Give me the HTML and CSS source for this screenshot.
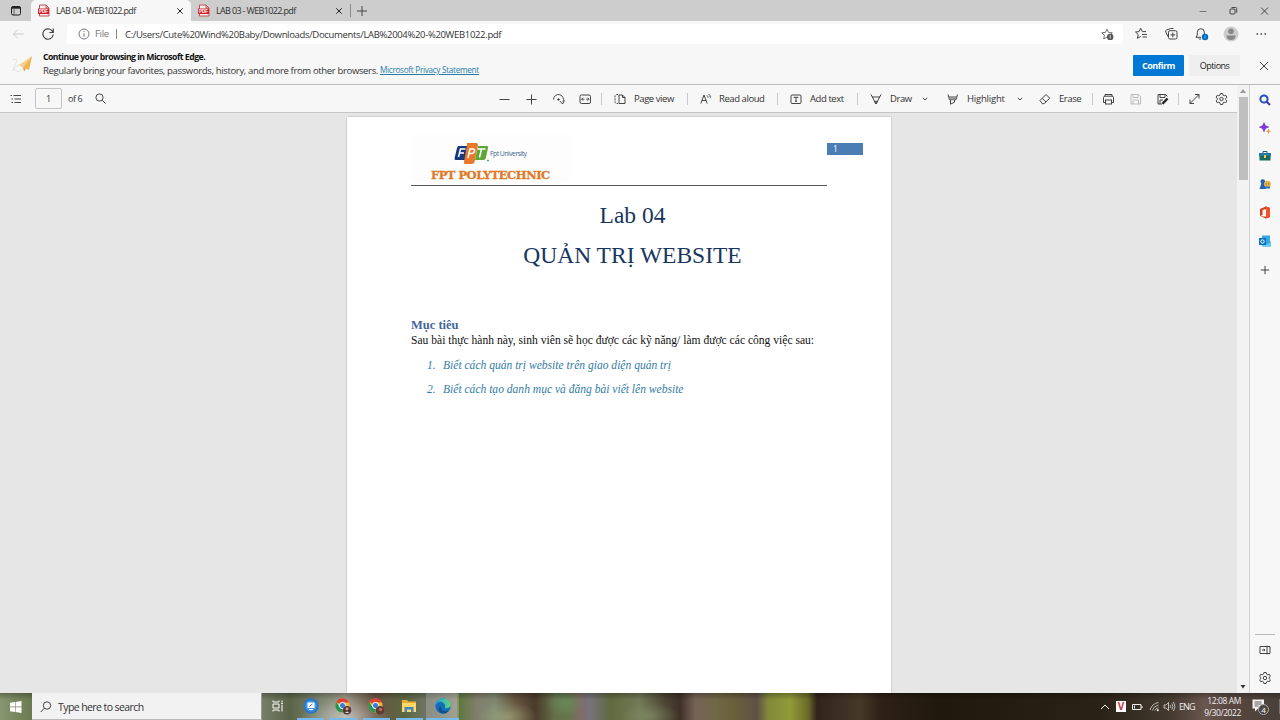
FILE: index.html
```html
<!DOCTYPE html>
<html lang="en">
  <head>
    <meta charset="utf-8">
    <meta name="viewport" content="width=device-width, initial-scale=1.0">
    <title>LAB 04 - WEB1022.pdf</title>
    <link rel="stylesheet" href="styles.css">
  </head>
  <body>

    <!-- Tabs -->
    <div class="titlebar">
      <div class="tab-actions">
        <svg width="12" height="12" viewBox="0 0 12 12"><rect x="1.500" y="1.500" width="9" height="8.500" rx="1.500"/><path d="M1.500 2.800h9" stroke-width="1.800"/><path d="M4 4v6" stroke-width=".6"/></svg>
      </div>
      <div class="tab active">
        <svg class="pdf" width="12" height="13" viewBox="0 0 12 13"><path d="M1.500 1h6.500l3 3v8h-9.500z" fill="#f5eeee" stroke="#b55"/><path d="M8 1v3h3" stroke="#b55"/><rect x="0" y="4.500" width="11" height="5.500" fill="#d6202c" stroke="none"/><text x="1" y="9">PDF</text></svg>
        <span class="tab-name">LAB 04 - WEB1022.pdf</span>
        <svg class="close" width="8" height="8" viewBox="0 0 8 8"><path d="M1.300 1.300l5.400 5.400M6.700 1.300l-5.400 5.400"/></svg>
      </div>
      <div class="tab">
        <svg class="pdf" width="12" height="13" viewBox="0 0 12 13"><path d="M1.500 1h6.500l3 3v8h-9.500z" fill="#f5eeee" stroke="#b55"/><path d="M8 1v3h3" stroke="#b55"/><rect x="0" y="4.500" width="11" height="5.500" fill="#d6202c" stroke="none"/><text x="1" y="9">PDF</text></svg>
        <span class="tab-name">LAB 03 - WEB1022.pdf</span>
        <svg class="close" width="8" height="8" viewBox="0 0 8 8"><path d="M1.300 1.300l5.400 5.400M6.700 1.300l-5.400 5.400"/></svg>
      </div>
      <div class="new-tab">
        <svg width="12" height="12" viewBox="0 0 12 12"><path d="M6 1v10M1 6h10"/></svg>
      </div>
      <div class="window-buttons">
        <svg width="30" height="12" viewBox="0 0 30 12"><path d="M11.500 6.500h7" stroke="#777"/></svg>
        <svg width="31" height="12" viewBox="0 0 31 12"><rect x="12" y="4" width="5" height="5" rx="1"/><path d="M13.500 2.500h4a1.200 1.200 0 0 1 1.200 1.200v4"/></svg>
        <svg width="31" height="12" viewBox="0 0 31 12"><path d="M12 2.500l7 7M19 2.500l-7 7"/></svg>
      </div>
    </div>

    <!-- Address bar -->
    <div class="addressbar">
      <svg class="back" width="13" height="12" viewBox="0 0 13 12"><path d="M12 6H1.500M6 1.500L1.500 6 6 10.500"/></svg>
      <svg class="reload" width="14" height="14" viewBox="0 0 14 14"><path d="M11.900 5.200A5.200 5.200 0 1 0 12.200 7.500M12.300 1.500v4h-4" stroke-width="1.200"/></svg>
      <div class="url">
        <svg width="12" height="12" viewBox="0 0 12 12"><circle cx="6" cy="6" r="5" stroke="#777"/><path d="M6 5.300v3.500M6 3v1.200" stroke="#777"/></svg>
        <span class="scheme">File</span>
        <span class="path">C:/Users/Cute%20Wind%20Baby/Downloads/Documents/LAB%2004%20-%20WEB1022.pdf</span>
        <svg class="star" width="13" height="13" viewBox="0 0 13 13"><path d="M6 1l1.500 3.400 3.800.4-2.800 2.500.8 3.700L6 9.100 2.700 11l.8-3.700L.7 4.800l3.800-.4z" stroke="#666" stroke-width=".9"/><circle cx="9.200" cy="8.900" r="3.200" fill="#555" stroke="none"/><path d="M9.200 7.200v3.400" stroke="#ddd"/></svg>
      </div>
      <div class="browser-tools">
        <svg width="29" height="14" viewBox="0 0 29 14"><path d="M18 4.600h-3.700L12.700 1.300l-1.600 3.300-3.600.4 2.700 2.500-.8 3.800 3.400-1.900M14 7.400h5M14.500 10h4.500"/></svg>
        <svg width="29" height="14" viewBox="0 0 29 14"><path d="M11 9.700L8.800 5a1.500 1.500 0 0 1 .9-2l4-1.500h2.800"/><rect x="11.500" y="3.700" width="8.500" height="8.300" rx="1.500"/><path d="M15.800 5.500v4.700M13.500 7.900h4.700"/></svg>
        <svg width="31" height="14" viewBox="0 0 31 14"><path d="M15 10.300H10L11.300 8V5.200a3.500 3.500 0 0 1 7 0V7M12.500 11.200a2 2 0 0 0 2.500.8"/><circle cx="19" cy="10" r="3.200" fill="#0067c0" stroke="none"/><path d="M19 8.300v3.400" stroke="#9cf" stroke-width=".8"/></svg>
        <svg width="29" height="16" viewBox="0 0 29 16"><circle cx="14" cy="8" r="7.500" fill="#cfcdcb" stroke="none"/><circle cx="14" cy="5.300" r="2.800" fill="#888" stroke="none"/><path d="M9.500 9.500h9c0 3-1.800 4.600-4.500 4.600S9.500 12.500 9.500 9.500z" fill="#888" stroke="none"/></svg>
        <svg width="31" height="14" viewBox="0 0 31 14"><path d="M10.500 7h1.600M14.500 7h1.600M18.500 7h1.600" stroke-width="1.500"/></svg>
      </div>
    </div>

    <!-- Import notice -->
    <div class="notice">
      <svg width="26" height="26" viewBox="0 0 26 26"><path d="M3 7C6 5 8 7 6 10s-3 7 0 8c4 2 8-2 6-5S4 15 2 18" stroke="#ddd" stroke-width=".8"/><path d="M22 3L9 12l4 2.500z" fill="#f7cf87" stroke="none"/><path d="M22 3l-9 11.500 6 2.500z" fill="#f0b457" stroke="none"/><path d="M13 14.500l1 4 2-2.700z" fill="#d99a45" stroke="none"/></svg>
      <div class="notice-text">
        <b>Continue your browsing in Microsoft Edge.</b>
        <p><span>Regularly bring your favorites, passwords, history, and more from other browsers.</span> <a href="#">Microsoft Privacy Statement</a></p>
      </div>
      <button class="confirm">Confirm</button>
      <button class="options">Options</button>
      <svg class="dismiss" width="10" height="10" viewBox="0 0 10 10"><path d="M1 1l8 8M9 1L1 9"/></svg>
    </div>

    <div class="main">
      <div class="viewer">
        <div class="content">
          <!-- PDF toolbar -->
          <div class="toolbar">
            <svg class="contents" width="12" height="10" viewBox="0 0 12 10"><path d="M3.500 1.500H11M4.500 5H11M4.500 8.500H11M.5 1.500H2M1.500 5H3M1.500 8.500H3"/></svg>
            <div class="page-number">1</div>
            <span class="page-count">of 6</span>
            <svg class="find" width="11" height="11" viewBox="0 0 11 11"><circle cx="4.500" cy="4.500" r="3.600"/><path d="M7.200 7.200l3.300 3.300"/></svg>
            <div class="zoom-tools">
              <svg width="27" height="14" viewBox="0 0 27 14"><path d="M8.500 7.500h10"/></svg>
              <svg width="27" height="14" viewBox="0 0 27 14"><path d="M13.500 2.500v10M8.500 7.500h10"/></svg>
              <svg width="27" height="14" viewBox="0 0 27 14"><path d="M8.500 7.500a5 5 0 1 1 9.500 2.200M14.800 9l2.700 3 2-3.500"/><circle cx="13.500" cy="7.500" r=".8" fill="#444"/></svg>
              <svg width="27" height="14" viewBox="0 0 27 14"><rect x="8" y="3" width="10.500" height="8.500" rx="1.500"/><path d="M9.800 7.200h2.700M14 7.200h2.700M11 5.700L9.500 7.200 11 8.700M15.500 5.700L17 7.200l-1.500 1.500" stroke-width=".9"/></svg>
            </div>
            <div class="tool pageview">
              <svg width="12" height="12" viewBox="0 0 12 12"><path d="M5 2v8.500h6v-6L8.500 2zM8.500 2v2.500H11"/><path d="M4 1.500H2.500A1.500 1.500 0 0 0 1 3v6a1.500 1.500 0 0 0 1.500 1.500H4" stroke-dasharray="2 1"/></svg>
              <span>Page view</span>
            </div>
            <div class="tool readaloud">
              <svg width="12" height="12" viewBox="0 0 12 12"><path d="M.8 10.500L4 2l3.200 8.500M2 7.500h4M7 2.500q1 .8 1 2.200M8.500 1q2 1.300 2 3.800"/></svg>
              <span>Read aloud</span>
            </div>
            <div class="tool addtext">
              <svg width="12" height="12" viewBox="0 0 12 12"><rect x="1" y="2" width="10" height="8.500" rx="1"/><path d="M4 5V4.300h4V5M6 4.300v4M5 8.300h2"/></svg>
              <span>Add text</span>
            </div>
            <div class="tool draw">
              <svg width="12" height="12" viewBox="0 0 12 12"><path d="M1 1.500l5 9.500 5-9.500M2 4h8M4.500 8.300L6 11l1.500-2.700z"/></svg>
              <span>Draw</span>
              <svg class="chevron" width="6" height="4" viewBox="0 0 6 4"><path d="M.8.8L3 3 5.200.8"/></svg>
            </div>
            <div class="tool highlight">
              <svg width="12" height="12" viewBox="0 0 12 12"><path d="M1 1.500l1.500 5.200h6.500l1.500-5.200M2 4h7.500M3.500 6.700v4.500l4-2V6.700"/><path d="M2.500 4h6.800l-.8 2.500H3z" fill="#999" stroke="none"/></svg>
              <span>Highlight</span>
              <svg class="chevron" width="6" height="4" viewBox="0 0 6 4"><path d="M.8.8L3 3 5.200.8"/></svg>
            </div>
            <div class="tool erase">
              <svg width="12" height="12" viewBox="0 0 12 12"><path d="M1 7.500L7 1.500l3.700 3.700-5.500 5.500H3.300zM3.200 5.300L7 9"/></svg>
              <span>Erase</span>
            </div>
            <div class="file-tools">
              <svg width="27" height="14" viewBox="0 0 27 14"><path d="M10 4V2.500h7V4M10 10.500H8.500V5.700A1.500 1.500 0 0 1 10 4.200h7a1.500 1.500 0 0 1 1.500 1.500v4.800H17"/><rect x="10.500" y="8" width="6" height="4"/></svg>
              <svg class="disabled" width="27" height="14" viewBox="0 0 27 14"><path d="M9 2.500h7.500l2 2V12H9zM11 2.500v3h5v-3M11 12V8h5.500v4"/></svg>
              <svg width="27" height="14" viewBox="0 0 27 14"><path d="M13 12H9V2.500h7.500l2 2M11 2.500v3h5v-3M11 12V8h3"/><path d="M13.500 11.800l5-5.300" stroke="#222" stroke-width="2.400"/></svg>
            </div>
            <div class="view-tools">
              <svg width="27" height="14" viewBox="0 0 27 14"><path d="M9 11.500l9-9M14 2.500h4v4M9 7.500v4h4"/></svg>
              <svg width="27" height="14" viewBox="0 0 27 14"><path d="M12.400 1.500h2.200l.4 1.600 1.200.7 1.600-.5 1.100 1.900-1.200 1.100v1.400l1.200 1.100-1.100 1.900-1.600-.5-1.200.7-.4 1.600h-2.200l-.4-1.600-1.200-.7-1.600.5-1.100-1.900 1.200-1.100V6.300L8.100 5.200l1.100-1.900 1.600.5 1.200-.7z"/><circle cx="13.500" cy="7" r="1.700"/></svg>
            </div>
          </div>

          <!-- PDF page -->
          <div class="document" lang="vi">
            <div class="page">
              <div class="page-header">
                <div class="logo">
                  <div class="logo-row">
                    <svg width="36" height="23" viewBox="0 0 36 23">
                      <path d="M4 4h10l-3 14H1.500Q.3 18 .6 16L3 6z" fill="#183a7c" stroke="none"/>
                      <path d="M13 1h9q2.300 0 2 2l-3.500 17q-.4 2-3 2H11q-1.400 0-1-2l3-17z" fill="#e9792a" stroke="none"/>
                      <path d="M24 4h9q1.600 0 1 2l-2.200 10q-.4 2-2.300 2h-8.500z" fill="#5da637" stroke="none"/>
                      <path d="M4.500 15l2-8h5M5.500 11h4.500M14 16l2-9h3q2 .2 1.500 2.200T18 11.500h-3M23.500 7h8M27.500 7l-2 8.500" stroke="#fff" stroke-width="1.500"/>
                      <circle cx="34" cy="18.500" r=".6" stroke="#4b8b55"/>
                    </svg>
                    <span>Fpt University</span>
                  </div>
                  <div class="logo-name">FPT POLYTECHNIC</div>
                </div>
                <div class="page-badge">1</div>
              </div>
              <h1>Lab 04</h1>
              <h1>QUẢN TRỊ WEBSITE</h1>
              <h2>Mục tiêu</h2>
              <p>Sau bài thực hành này, sinh viên sẽ học được các kỹ năng/ làm được các công việc sau:</p>
              <ol>
                <li><i>1.</i><span>Biết cách quản trị website trên giao diện quản trị</span></li>
                <li><i>2.</i><span>Biết cách tạo danh mục và đăng bài viết lên website</span></li>
              </ol>
            </div>
          </div>
        </div>
        <div class="scrollbar">
          <svg width="6" height="4" viewBox="0 0 6 4"><path d="M3 0l3 4H0z" fill="#999" stroke="none"/></svg>
          <div class="thumb"></div>
          <svg width="6" height="4" viewBox="0 0 6 4"><path d="M.5 0h5L3 3.500z" fill="#333" stroke="none"/></svg>
        </div>
      </div>

      <!-- Edge sidebar -->
      <div class="sidebar">
        <svg width="12" height="12" viewBox="0 0 12 12"><circle cx="5" cy="5" r="3.600" stroke="#204fc0" stroke-width="2"/><path d="M7.500 7.500l3.500 3.500" stroke="#3b35b5" stroke-width="2"/></svg>
        <svg width="12" height="12" viewBox="0 0 12 12"><path d="M5 0l1.700 3.500L10.500 5 6.700 6.700 5 10.500 3.300 6.700-.3 5l3.600-1.500z" fill="#8138d8" stroke="none"/><path d="M9.500 6.500l.8 2 1.700.8-1.700.7-.8 2-.8-2-1.700-.7 1.700-.8z" fill="#e2a12b" stroke="none"/></svg>
        <svg width="12" height="12" viewBox="0 0 12 12"><path d="M4 3V1.500h4V3" stroke="#15598c"/><rect x="0" y="3" width="12" height="3.500" fill="#1e7ba5" stroke="none"/><rect x=".5" y="6" width="11" height="4.500" fill="#176b62" stroke="none"/><path d="M5 5h2v3H5z" fill="#ffc93c" stroke="none"/></svg>
        <svg width="12" height="12" viewBox="0 0 12 12"><circle cx="3.800" cy="3.500" r="2.300" fill="#2562b4" stroke="none"/><path d="M2.800 4h2l1.500 5.500.7 1.500H.5L1 9.500z" fill="#2562b4" stroke="none"/><circle cx="8.500" cy="6" r="3.300" fill="#e6b345" stroke="none"/><path d="M6 9.500h5" stroke="#286fbb" stroke-width="2"/><path d="M7.300 5.500v1M9.700 5.500v1" stroke="#705323"/></svg>
        <svg width="12" height="13" viewBox="0 0 12 13"><path d="M7 .5l4 1.500v9L7 12.500 1 10l6 .7V3L3.500 4v5L1 10V3z" fill="#d83b17" stroke="none"/><path d="M7 .5l4 1.500v9l-4 1.500z" fill="#ee5526" stroke="none"/></svg>
        <svg width="12" height="12" viewBox="0 0 12 12"><path d="M3 .5h8v5.500l1 1v4.500H3V6z" fill="#36a9e5" stroke="none"/><path d="M3 8l5 1.500L12 7v4.500H3z" fill="#63cdf2" stroke="none"/><rect y="3" width="7" height="7" fill="#0874c4" stroke="none"/><circle cx="3.500" cy="6.500" r="1.700" stroke="#fff"/></svg>
        <svg class="add" width="10" height="10" viewBox="0 0 10 10"><path d="M5 .8v8.400M.8 5h8.400"/></svg>
        <div class="sidebar-bottom">
          <svg width="12" height="10" viewBox="0 0 12 10"><path d="M8 1.500H1v7h7M8 .5v9M8 1.500h3v7H8M3 5h3M4.800 3.800L6 5 4.800 6.200"/></svg>
          <svg width="14" height="14" viewBox="6.500 0 14 14"><path d="M12.400 1.500h2.200l.4 1.600 1.200.7 1.600-.5 1.100 1.900-1.200 1.100v1.400l1.200 1.100-1.100 1.900-1.600-.5-1.200.7-.4 1.600h-2.200l-.4-1.600-1.200-.7-1.600.5-1.100-1.900 1.200-1.100V6.300L8.100 5.200l1.100-1.900 1.600.5 1.200-.7z"/><circle cx="13.500" cy="7" r="1.700"/></svg>
        </div>
      </div>
    </div>

    <!-- Windows taskbar -->
    <div class="taskbar">
      <div class="start">
        <svg width="12" height="12" viewBox="0 0 12 12"><path d="M0 1.700L5 1v4.600H0zM5.600.9L11.500 0v5.600H5.600zM0 6.200h5V11l-5-.7zM5.600 6.200h5.900V12l-5.900-.9z" fill="#fff" stroke="none"/></svg>
      </div>
      <div class="search">
        <svg width="12" height="12" viewBox="0 0 12 12"><circle cx="7" cy="4.500" r="3.700"/><path d="M4.300 7.200L.8 11"/></svg>
        <span>Type here to search</span>
      </div>
      <div class="app">
        <svg width="12" height="12" viewBox="0 0 12 12"><path d="M1 .5V2h6V.5M1 11.500V10h6v1.500M1 4h6v4H1zM10 .5v2M10 5v6.500M9 3.700h2" stroke="#fff"/></svg>
      </div>
      <div class="app open">
        <svg width="16" height="16" viewBox="0 0 16 16"><circle cx="8" cy="8" r="7.700" fill="#2876c5" stroke="none"/><circle cx="8" cy="8" r="5.700" fill="#4694de" stroke="none"/><path d="M4.500 4.500h7v5.500h-7z" fill="#fff" stroke="none"/><path d="M6 11.500h4" stroke="#fff"/><path d="M6.500 8.500l3-2.500" stroke="#2876c5"/></svg>
      </div>
      <div class="app open">
        <svg width="17" height="17" viewBox="0 0 17 17"><circle cx="7.500" cy="7.500" r="7" fill="#f2b92c" stroke="none"/><path d="M7.500 7.500L1.300 4A7 7 0 0 1 14 4.500H7.500z" fill="#dd4233" stroke="none"/><path d="M7.500 7.500v7A7 7 0 0 1 1.300 4l3 5z" fill="#239451" stroke="none"/><circle cx="7.500" cy="7.500" r="3.100" fill="#347de0" stroke="#fff"/><circle cx="12" cy="12.200" r="4.300" fill="#55343a" stroke="none"/><circle cx="12" cy="10.800" r="1.500" fill="#d3a18e" stroke="none"/><path d="M10 15q2-3 4 0" fill="#ddd" stroke="none"/></svg>
      </div>
      <div class="app open">
        <svg width="17" height="17" viewBox="0 0 17 17"><circle cx="7.500" cy="7.500" r="7" fill="#f2b92c" stroke="none"/><path d="M7.500 7.500L1.300 4A7 7 0 0 1 14 4.500H7.500z" fill="#dd4233" stroke="none"/><path d="M7.500 7.500v7A7 7 0 0 1 1.300 4l3 5z" fill="#239451" stroke="none"/><circle cx="7.500" cy="7.500" r="3.100" fill="#347de0" stroke="#fff"/><circle cx="12" cy="12.200" r="4.300" fill="#603a35" stroke="none"/><circle cx="12.500" cy="11.500" r="1.800" fill="#b56b59" stroke="none"/></svg>
      </div>
      <div class="app open">
        <svg width="15" height="14" viewBox="0 0 15 14"><path d="M0 1h5l1.500 1.500H14V13H0z" fill="#e9ad32" stroke="none"/><path d="M0 4h14v9H0z" fill="#ffd767" stroke="none"/><path d="M2.500 13V8h9v5H9v-2.500H5V13z" fill="#4387bd" stroke="none"/></svg>
      </div>
      <div class="app open current">
        <svg width="16" height="16" viewBox="0 0 16 16"><defs><linearGradient id="edgeTop"><stop offset="0" stop-color="#219de2"/><stop offset="1" stop-color="#62d579"/></linearGradient></defs><circle cx="8" cy="8" r="7.700" fill="#116fb8" stroke="none"/><path d="M.4 7.500C1 3 4 .3 8 .3c4.500 0 7.700 3.200 7.700 6.200 0 2.500-2 3.700-4 3.700-2.200 0-2-.8-1.500-1.700C10.500 6 5-.1.400 7.500z" fill="url(#edgeTop)" stroke="none"/><path d="M6 8c-1 5 4 6.500 8 4-2 3-5 4-7.500 3C3 13.500 3 9 6 8z" fill="#164b8d" stroke="none"/></svg>
      </div>
      <div class="tray">
        <svg width="10" height="8" viewBox="0 0 10 8"><path d="M1 6l4-4 4 4" stroke="#eee"/></svg>
        <div class="unikey">V</div>
        <svg class="battery" width="11" height="8" viewBox="0 0 11 8"><path d="M.5 1.500h8.500v5H.5zM10 3v2" stroke="#eee"/><path d="M2 2.500h1v3H2z" fill="#eee" stroke="none"/></svg>
        <svg class="wifi" width="11" height="11" viewBox="0 0 11 11"><path d="M1 9Q3 2.500 9.500 1.500M3.300 9.500Q4.500 5 9.500 4M5.800 9.700Q6.500 7.500 9.500 6.700" stroke="#bbb"/><circle cx="8.800" cy="9.300" r="1" fill="#fff" stroke="none"/></svg>
        <svg class="sound" width="13" height="11" viewBox="0 0 13 11"><path d="M1 4h2l2.500-2.500v8L3 7H1zM7 4q1.200 1.500 0 3M8.800 2.500q2.200 3 0 6M10.500 1q3 4.500 0 9" stroke="#ddd" stroke-width=".8"/></svg>
        <span class="lang">ENG</span>
        <div class="clock"><span>12:08 AM</span><span>9/30/2022</span></div>
        <div class="action-center">
          <svg width="13" height="13" viewBox="0 0 13 13"><path d="M.5.5h11.500v9H6l-3 3v-3H.5z" fill="#f4f4f4" stroke="none"/><path d="M2.500 3h7M2.500 5h7M2.500 7h4" stroke="#695852"/></svg>
          <span class="count">4</span>
        </div>
      </div>
    </div>

  </body>
</html>
```
FILE: styles.css
```css
* {
  box-sizing: border-box;
}

body {
  margin: 0;
  height: 720px;
  display: flex;
  flex-direction: column;
  overflow: hidden;
  background: #f7f7f7;
  color: #333;
  font-family: "Open Sans", "Noto Sans", sans-serif;
  font-size: 9.500px;
  white-space: nowrap;
}

svg {
  flex: none;
  display: block;
  fill: none;
  stroke: #444;
  stroke-width: 1;
}

p, h1, h2, ol {
  margin: 0;
  padding: 0;
}

/* tabs */
.titlebar {
  flex: none;
  height: 21px;
  display: flex;
  background: #cdcdcd;
}

.tab-actions {
  width: 31px;
  padding: 5px 0 0 10px;
}

.tab-actions svg,
.close {
  stroke: #222;
}

.tab {
  width: 159px;
  display: flex;
  align-items: center;
  padding: 0 7px 0 7px;
  border-radius: 5px 5px 0 0;
}

.tab.active {
  width: 160px;
  background: #f7f7f7;
}

.pdf text {
  font: bold 4.500px "Liberation Sans", sans-serif;
  fill: #fff;
  stroke: none;
}

.tab-name {
  margin-left: 6px;
  font-size: 9px;
  letter-spacing: -0.650px;
}

.close {
  margin-left: auto;
}

.new-tab {
  display: flex;
  align-items: center;
  height: 13px;
  margin-top: 4px;
  padding-left: 5px;
  border-left: 1px solid #888;
}

.window-buttons {
  margin-left: auto;
  display: flex;
  align-items: center;
}

/* address bar */
.addressbar {
  flex: none;
  height: 26px;
  display: flex;
  align-items: center;
}

.back {
  margin-left: 12px;
  stroke: #ccc;
}

.reload {
  margin: 0 12px 0 16px;
}

.url {
  width: 1056px;
  height: 20px;
  display: flex;
  align-items: center;
  padding: 0 9px 0 11px;
  background: #fff;
  border-radius: 3px;
}

.scheme {
  width: 22px;
  margin-left: 5px;
  color: #777;
  border-right: 1px solid #888;
  line-height: 10px;
  letter-spacing: -0.300px;
}

.path {
  margin-left: 8px;
  letter-spacing: -0.330px;
}

.star {
  margin-left: auto;
}

.browser-tools {
  display: flex;
  align-items: center;
  margin-left: 5px;
}

/* import notice */
.notice {
  flex: none;
  height: 38px;
  display: flex;
  align-items: center;
  border-bottom: 1px solid #bbb;
}

.notice > svg:first-child {
  margin-left: 10px;
}

.notice-text {
  flex: 1;
  margin-left: 7px;
  padding-bottom: 3px;
  line-height: 13px;
}

.notice-text b {
  display: block;
  color: #111;
  font-size: 8.700px;
  letter-spacing: -0.520px;
}

.notice-text p {
  display: flex;
  letter-spacing: -0.340px;
}

.notice-text a {
  margin-left: 2px;
  margin-top: -1px;
  color: #267eaa;
  font-size: 8.200px;
  letter-spacing: -0.300px;
}

.notice button {
  width: 51px;
  height: 21px;
  padding: 0;
  border: 0;
  border-radius: 1px;
  font: 9px "Open Sans", sans-serif;
  letter-spacing: -0.500px;
}

.notice .confirm {
  background: #0078d4;
  color: #fff;
  font-weight: bold;
}

.notice .options {
  margin-left: 5px;
  background: #efefef;
  color: #222;
}

.dismiss {
  margin: 0 11px 0 19px;
}

/* viewer */
.main {
  flex: 1;
  min-height: 0;
  display: flex;
}

.viewer {
  flex: 1;
  display: flex;
}

.content {
  width: 1237px;
  display: flex;
  flex-direction: column;
}

.toolbar {
  flex: none;
  height: 28px;
  display: flex;
  align-items: center;
  border-bottom: 1px solid #c6c6c6;
}

.contents {
  margin-left: 10px;
}

.page-number {
  width: 27px;
  height: 21px;
  margin-left: 13px;
  border: 1px solid #c4c4c4;
  border-radius: 2px;
  text-align: center;
  line-height: 19px;
  font-size: 9px;
}

.page-count {
  width: 33px;
  padding-left: 6px;
  font-size: 9px;
  letter-spacing: -0.450px;
}

.find {
  margin-right: 385px;
}

.zoom-tools {
  display: flex;
  width: 110px;
}

.tool {
  height: 12px;
  display: flex;
  align-items: center;
  padding-left: 12px;
  border-left: 1px solid #c8c8c8;
}

.tool span {
  margin-left: 8px;
  letter-spacing: -0.430px;
}

.pageview {
  width: 86px;
}

.readaloud {
  width: 90px;
}

.readaloud span {
  margin-left: 7px;
}

.addtext {
  width: 80px;
}

.draw {
  width: 77px;
}

.highlight {
  width: 95px;
  padding-left: 13px;
}

.highlight,
.erase {
  border-left: 0;
}

.highlight span {
  letter-spacing: -0.200px;
}

.erase {
  width: 63px;
  padding-left: 10px;
}

.chevron {
  margin: 0 6px 0 auto;
}

.file-tools,
.view-tools {
  height: 12px;
  display: flex;
  align-items: center;
  padding-left: 2px;
  border-left: 1px solid #c8c8c8;
}

.file-tools {
  width: 86px;
}

.disabled {
  stroke: #bbb;
}

.document {
  flex: 1;
  min-height: 0;
  padding-top: 4px;
  background: #e6e6e6;
}

.page {
  width: 544px;
  height: 100%;
  margin-left: 347px;
  padding: 18px 28px 0 64px;
  background: #fff;
  box-shadow: 0 0 2px #aaa;
  font-family: "Liberation Serif", serif;
}

.page-header {
  height: 51px;
  display: flex;
}

.logo {
  width: 416px;
  border-bottom: 1px solid #555;
}

.logo-row {
  display: flex;
  align-items: center;
  width: 160px;
  height: 33px;
  padding-left: 43px;
  padding-top: 3px;
  background: #fdfdfd;
  color: #3c6791;
  font: 6.800px "Open Sans", sans-serif;
  letter-spacing: -0.500px;
}

.logo-name {
  width: 160px;
  height: 14px;
  padding-left: 20px;
  background: #fdfdfd;
  color: #e17a27;
  font: bold 11.500px/14px "DejaVu Serif", serif;
  letter-spacing: -0.480px;
  -webkit-text-stroke: 0.300px #e17a27;
}

.page-badge {
  width: 36px;
  height: 12px;
  margin-top: 8px;
  padding-left: 6px;
  background: #4b7db5;
  color: #fff;
  font: 8.500px/12px "Open Sans", sans-serif;
}

h1 {
  margin-right: 9px;
  height: 40px;
  color: #17365d;
  font-size: 23.500px;
  font-weight: normal;
  line-height: 58px;
  text-align: center;
}

h2 {
  margin-top: 51px;
  color: #41679b;
  font-size: 12.500px;
  line-height: 16px;
}

.page p {
  color: #111;
  font-size: 11.570px;
  line-height: 16px;
}

.page ol {
  margin-top: 4px;
  list-style: none;
  color: #317ca5;
  font-size: 11.550px;
  font-style: italic;
  line-height: 24px;
}

.page li {
  display: flex;
}

.page li i {
  width: 32px;
  padding-left: 16px;
}

.scrollbar {
  width: 12px;
  display: flex;
  flex-direction: column;
  align-items: center;
  padding: 4px 0;
  background: #f2f2f2;
}

.thumb {
  width: 9px;
  height: 83px;
  margin: 4px 0 auto;
  background: #bfbfbf;
}

/* sidebar */
.sidebar {
  width: 31px;
  display: flex;
  flex-direction: column;
  align-items: center;
  gap: 16px;
  padding-top: 9px;
  border-left: 1px solid #d0d0d0;
}

.sidebar .add {
  margin-top: 2px;
}

.sidebar-bottom {
  width: 20px;
  display: flex;
  flex-direction: column;
  align-items: center;
  gap: 16px;
  margin-top: auto;
  padding: 10px 0 8px;
  border-top: 1px solid #bbb;
}

/* taskbar */
.taskbar {
  flex: none;
  height: 27px;
  display: flex;
  background:
    linear-gradient(#0004, #0000 7px),
    radial-gradient(ellipse 45px 18px at 345px 25px, #ddd8 0, #ddd0 100%),
    radial-gradient(ellipse 30px 16px at 508px 24px, #aab58799 0, #aab58700 100%),
    radial-gradient(ellipse 20px 13px at 565px 10px, #67965e99 0, #67965e00 100%),
    radial-gradient(ellipse 30px 14px at 650px 23px, #87936a99 0, #87936a00 100%),
    linear-gradient(90deg, #87966f 0, #6b7b52 31px, #777e68 262px, #5a6448 290px, #7d8570 320px, #a09c8c 345px, #685442 375px, #5c6842 405px, #72766a 430px, #8b8b79 457px, #5b7839 458px, #837e6e 478px, #7e8970 495px, #66543e 515px, #4a3a2a 535px, #65704b 555px, #68754e 570px, #806c66 580px, #77727d 590px, #606a3e 610px, #727956 640px, #4b4434 665px, #3f3026 680px, #756257 695px, #706846 715px, #69603a 735px, #5f5148 757px, #81883a 768px, #929b38 790px, #6c6b2a 808px, #30231b 817px, #463928 860px, #2d2116 880px, #21180d 940px, #2a2217 1100px, #443a2e 1170px, #69564f 1205px, #584740 1230px, #494039 1280px);
}

.start {
  width: 32px;
  padding: 8px 0 0 10px;
}

.search {
  width: 230px;
  display: flex;
  align-items: center;
  padding: 1px 0 0 8px;
  background: #f2f2f2;
  border-bottom: 1px solid #bbb;
  border-right: 1px solid #999;
  font-size: 10.500px;
}

.search span {
  margin-left: 6px;
  letter-spacing: -0.580px;
}

.app {
  width: 33px;
  display: flex;
  align-items: center;
  justify-content: center;
  padding-bottom: 1px;
}

.app:nth-child(3) {
  width: 32px;
}

.app.open {
  background: linear-gradient(#76b9ed, #76b9ed) bottom / 27px 2px no-repeat;
}

.app.current {
  background-color: #ffffff30;
  background-size: 100% 2px;
}

.tray {
  display: flex;
  align-items: center;
  margin-left: auto;
  color: #eee;
  font-size: 9px;
}

.unikey {
  width: 10px;
  height: 11px;
  margin-left: 6px;
  background: #fff;
  color: #c33949;
  text-align: center;
  font: bold 10px/11px "Open Sans", sans-serif;
}

.battery {
  margin-left: 6px;
}

.wifi {
  margin-left: 6px;
}

.sound {
  margin-left: 3px;
}

.lang {
  width: 15px;
  margin-left: 3px;
  letter-spacing: -0.900px;
}

.clock {
  display: flex;
  flex-direction: column;
  width: 36px;
  margin-left: 11px;
  font-size: 8.500px;
  line-height: 12px;
  letter-spacing: -0.400px;
  align-items: flex-end;
}

.action-center {
  position: relative;
  height: 15px;
  width: 28px;
  margin-left: 11px;
  border-right: 1px solid #77706b;
}

.count {
  position: absolute;
  left: 6px;
  top: 5px;
  width: 11px;
  height: 11px;
  border: 1px solid #aaa;
  border-radius: 50%;
  background: #4d4642;
  color: #fff;
  font-size: 8px;
  line-height: 9px;
  text-align: center;
}
```
